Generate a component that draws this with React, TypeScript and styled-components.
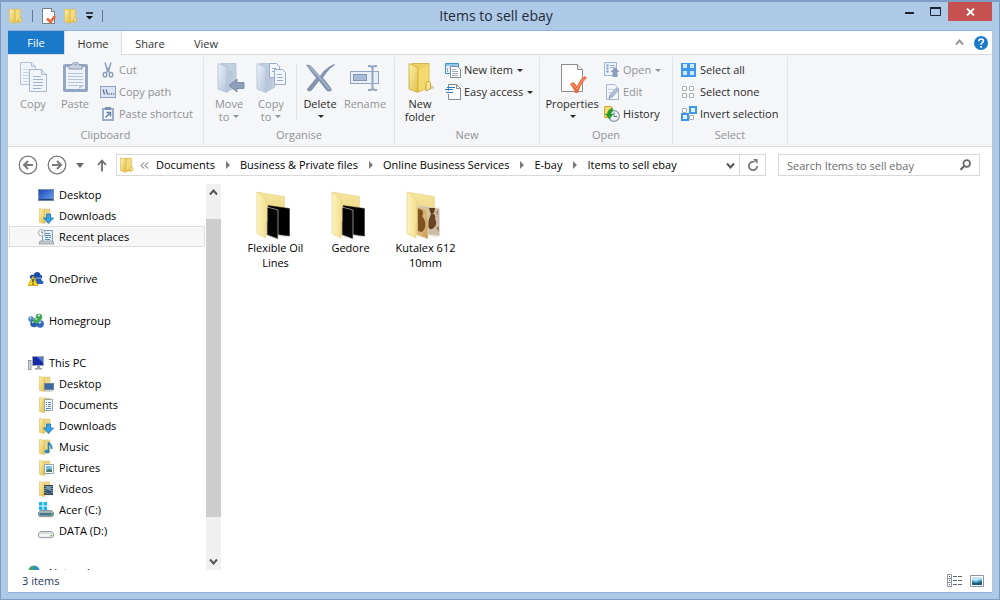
import React from "react";
import styled, { createGlobalStyle, css } from "styled-components";

const GlobalStyle = createGlobalStyle`
  *, *::before, *::after { box-sizing: border-box; }
  body {
    margin: 0;
    font-family: "Open Sans", "Noto Sans", sans-serif;
    font-size: 11px;
    line-height: 16px;
    color: #1a1a1a;
  }
  button, input { font: inherit; color: inherit; margin: 0; }
  button { background: none; border: 0; padding: 0; cursor: pointer; }
  svg { display: block; flex: none; }
  ul, ol { list-style: none; margin: 0; padding: 0; }
`;

/* ---------- window frame ---------- */

const Window = styled.div`
  display: flex;
  flex-direction: column;
  height: 100vh;
  min-height: 320px;
  padding: 0 7px 6px;
  background: #afcae7;
  border: 1px solid #7e9cc4;
  border-top-width: 2px;
`;

const TitleBar = styled.header`
  display: grid;
  grid-template-columns: 1fr auto 1fr;
  height: 28px;
  flex: none;
`;

const QuickAccess = styled.div`
  display: flex;
  align-items: center;
  gap: 6px;
`;

const QuickRule = styled.span`
  width: 1px;
  height: 12px;
  margin: 0 2px;
  background: #64788f;
`;

const QuickButton = styled.button`
  display: flex;
`;

const Title = styled.h1`
  margin: 0;
  padding-right: 8px;
  font-size: 14px;
  line-height: 28px;
  font-weight: 400;
  color: #1e2a38;
`;

const Controls = styled.div`
  display: flex;
  justify-content: flex-end;
  align-items: flex-start;
`;

const ControlButton = styled.button<{ $close?: boolean }>`
  display: flex;
  align-items: center;
  justify-content: center;
  width: ${(p) => (p.$close ? 44 : 26)}px;
  height: 19px;
  background: ${(p) => (p.$close ? "#c75050" : "transparent")};
`;

const Client = styled.main`
  display: flex;
  flex-direction: column;
  flex: 1;
  min-height: 0;
  background: #fff;
  border: 1px solid #93b1d5;
  border-width: 1px 0;
`;

/* ---------- tabs ---------- */

const TabBar = styled.nav`
  display: flex;
  height: 24px;
  flex: none;
  border-bottom: 1px solid #dadbdc;
`;

const Tab = styled.button<{ $kind?: "file" | "active" }>`
  width: 56px;
  height: 24px;
  padding-top: 2px;
  color: #333;
  ${(p) =>
    p.$kind === "file" &&
    css`
      height: 23px;
      padding-top: 0;
      background: #1979ca;
      color: #fff;
    `}
  ${(p) =>
    p.$kind === "active" &&
    css`
      width: 58px;
      background: #f5f6f7;
      border: 1px solid #dadbdc;
      border-width: 0 1px;
    `}
`;

const TabTools = styled.div`
  display: flex;
  align-items: center;
  gap: 10px;
  margin-left: auto;
  padding-right: 4px;
`;

/* ---------- ribbon ---------- */

const Ribbon = styled.div`
  display: flex;
  height: 92px;
  flex: none;
  padding: 2px 0;
  background: #f5f6f7;
  border-bottom: 1px solid #dadbdc;
`;

const Group = styled.section<{ $width: number }>`
  display: flex;
  flex-direction: column;
  width: ${(p) => p.$width}px;
  padding: 2px 0 0 4px;
  border-right: 1px solid #e2e3e4;
`;

const GroupBody = styled.div`
  display: flex;
  height: 70px;
`;

const GroupLabel = styled.h2`
  margin: 0;
  padding-right: 4px;
  font-size: 11px;
  line-height: 18px;
  font-weight: 400;
  text-align: center;
  color: #8f9296;
`;

const BigButton = styled.button<{ $width?: number }>`
  display: flex;
  flex-direction: column;
  align-items: center;
  flex: none;
  width: ${(p) => p.$width ?? 42}px;
  padding-top: 3px;
  line-height: 13px;
  white-space: nowrap;
  color: #2b2b2b;
  &:disabled { color: #8f9296; }
`;

const BigLabel = styled.span`
  display: flex;
  flex-direction: column;
  align-items: center;
  margin-top: 3px;
`;

const LabelLine = styled.span`
  display: flex;
  align-items: center;
  height: 13px;
  gap: 3px;
`;

const SmallColumn = styled.div`
  display: flex;
  flex-direction: column;
  padding-left: 4px;
`;

const SmallButton = styled.button`
  display: flex;
  align-items: center;
  gap: 3px;
  height: 22px;
  white-space: nowrap;
  color: #2b2b2b;
  &:disabled { color: #8f9296; }
`;

const InnerRule = styled.span`
  width: 1px;
  height: 56px;
  margin: 5px 2px 0 4px;
  background: #e2e3e4;
`;

const Caret = styled.span`
  margin-left: 1px;
  border: solid transparent;
  border-width: 3px 3px 0;
  border-top-color: currentColor;
`;

/* ---------- address bar ---------- */

const AddressRow = styled.div`
  display: flex;
  align-items: center;
  height: 37px;
  flex: none;
  padding: 0 12px 1px 10px;
`;

const NavButtons = styled.div`
  display: flex;
  align-items: center;
  gap: 9px;
  width: 98px;
`;

const IconButton = styled.button`
  display: flex;
  align-items: center;
  justify-content: center;
`;

const UpButton = styled(IconButton)`
  width: 18px;
`;

const AddressBox = styled.div`
  display: flex;
  align-items: center;
  flex: 1;
  min-width: 0;
  height: 22px;
  border: 1px solid #d9d9d9;
`;

const Crumbs = styled.ol`
  display: flex;
  align-items: center;
  flex: 1;
  min-width: 0;
  padding-left: 2px;
`;

const Crumb = styled.li`
  display: flex;
  align-items: center;
  white-space: nowrap;
  color: #000;
`;

const CrumbArrow = styled.span`
  margin: 0 10px 0 11px;
  border: solid transparent;
  border-width: 4px 0 4px 4px;
  border-left-color: #7a7a7a;
`;

const OverflowMark = styled.span`
  display: flex;
  padding: 0 7px 0 5px;
`;

const Refresh = styled(IconButton)`
  width: 26px;
  height: 20px;
  margin-left: 4px;
  border-left: 1px solid #d9d9d9;
`;

const SearchBox = styled.label`
  display: flex;
  align-items: center;
  width: 202px;
  height: 22px;
  margin-left: 12px;
  padding: 0 7px 0 8px;
  border: 1px solid #d9d9d9;
`;

const SearchInput = styled.input`
  flex: 1;
  min-width: 0;
  height: 20px;
  padding: 0;
  border: 0;
  outline: 0;
  background: none;
  &::placeholder { color: #6d6d6d; opacity: 1; }
`;

/* ---------- body ---------- */

const Body = styled.div`
  display: flex;
  flex: 1;
  min-height: 0;
`;

const Tree = styled.nav`
  width: 198px;
  padding: 0 1px;
  overflow: hidden;
`;

const TreeGroup = styled.ul`
  margin-bottom: 21px;
`;

const TreeLink = styled.a<{ $root?: boolean; $selected?: boolean }>`
  display: flex;
  align-items: center;
  gap: 5px;
  height: 21px;
  padding-left: ${(p) => (p.$root ? 18 : 28)}px;
  border: 1px solid ${(p) => (p.$selected ? "#dedede" : "transparent")};
  background: ${(p) => (p.$selected ? "#f7f7f7" : "transparent")};
  color: #000;
  text-decoration: none;
  white-space: nowrap;
`;

const Scrollbar = styled.div`
  display: flex;
  flex-direction: column;
  width: 15px;
  background: #f0f0f0;
`;

const ScrollButton = styled(IconButton)`
  height: 17px;
  flex: none;
`;

const ScrollTrack = styled.div`
  display: grid;
  grid-template-rows: 18fr 298fr 36fr;
  flex: 1;
`;

const ScrollThumb = styled.div`
  grid-row: 2;
  background: #cdcdcd;
`;

const Files = styled.ul`
  display: flex;
  flex-wrap: wrap;
  align-content: flex-start;
  flex: 1;
  padding: 6px 17px;
`;

const FileItem = styled.li`
  display: flex;
  flex-direction: column;
  align-items: center;
  width: 75px;
  padding: 0 6px;
  line-height: 15px;
  text-align: center;
  color: #000;
`;

const StatusBar = styled.footer`
  display: flex;
  align-items: center;
  justify-content: space-between;
  height: 22px;
  flex: none;
  padding: 0 8px 0 14px;
  color: #1e395b;
`;

const ViewButtons = styled.div`
  display: flex;
  gap: 7px;
`;

/* ---------- icons ---------- */

const GradientSheet = styled.svg`
  position: absolute;
`;

const Gradients = () => (
  <GradientSheet width="0" height="0" aria-hidden="true">
    <defs>
      <linearGradient id="gold" x1="0" y1="0" x2="1" y2="1">
        <stop offset="0" stopColor="#fcf2ae" />
        <stop offset="1" stopColor="#e3bd45" />
      </linearGradient>
      <linearGradient id="flap" x1="0" y1="0" x2="1" y2="0">
        <stop offset="0" stopColor="#fcf3bd" />
        <stop offset="1" stopColor="#f2df8f" />
      </linearGradient>
      <linearGradient id="back" x1="0" y1="0" x2="0" y2="1">
        <stop offset="0" stopColor="#f4e49c" />
        <stop offset="1" stopColor="#e8cf78" />
      </linearGradient>
      <linearGradient id="ice" x1="0" y1="0" x2="1" y2="1">
        <stop offset="0" stopColor="#eaf1f9" />
        <stop offset="1" stopColor="#b4c4da" />
      </linearGradient>
      <linearGradient id="screen" x1="0" y1="0" x2="1" y2="1">
        <stop offset="0" stopColor="#1c42b8" />
        <stop offset="1" stopColor="#69a6ee" />
      </linearGradient>
      <linearGradient id="wood" x1="0" y1="0" x2="1" y2="1">
        <stop offset="0" stopColor="#b98b48" />
        <stop offset="0.5" stopColor="#dcb877" />
        <stop offset="1" stopColor="#c99a55" />
      </linearGradient>
    </defs>
  </GradientSheet>
);

const OpenFolder = () => (
  <svg width="16" height="16" viewBox="0 0 16 16">
    <path d="M6 1h6.500v11.500L8 15.500z" fill="#e8c85c" />
    <path d="M7 1.300h5.300v10L7 14z" fill="#f2dc80" stroke="#d4af3e" strokeWidth=".5" />
    <path d="M1.500.8 7 2v13.500l-5.500-1.800z" fill="url(#gold)" stroke="#dcb94c" strokeWidth=".6" />
    <path d="M11 10.500c.5-1.500 2.500-1.500 2.500 0v3L11 15z" fill="#f8e48e" stroke="#c9a437" strokeWidth=".6" />
  </svg>
);

const QuickProps = () => (
  <svg width="16" height="16" viewBox="0 0 16 16">
    <path d="M1.500.5h9l3 3v12h-12z" fill="#fff" stroke="#747b84" />
    <path d="M10.500.5v3h3" fill="#dfe6ee" stroke="#747b84" />
    <path d="m6 10.500 3.500 3.500L14 8" fill="none" stroke="#e8683a" strokeWidth="2.600" />
  </svg>
);

const QuickMenu = () => (
  <svg width="9" height="8" viewBox="0 0 9 8">
    <path d="M1 1h7" stroke="#111" strokeWidth="1.500" />
    <path d="M1 4h7L4.500 7.500z" fill="#111" />
  </svg>
);

const CopyIcon = () => (
  <svg width="32" height="32" viewBox="0 0 32 32" fill="#f1f5fa" stroke="#b4c4da">
    <path d="M3.500.5h11l4 4v18h-15z" />
    <path d="M14.500.5v4h4" fill="#dce5f1" />
    <path d="M6 7.500h8M6 10.500h6M6 13.500h6M6 16.500h6M6 19.500h6" stroke="#c6d3e4" />
    <path d="M12.500 7.500h12l5 5v17h-17z" stroke="#a5b7d1" />
    <path d="M24.500 7.500v5h5" fill="#dce5f1" stroke="#a5b7d1" />
    <path d="M16 14.500h8M16 17.500h10M16 20.500h10M16 23.500h10M16 26.500h8" stroke="#a0b3ce" />
  </svg>
);

const PasteIcon = () => (
  <svg width="32" height="32" viewBox="0 0 32 32">
    <rect x="4" y="2" width="25" height="28" rx="2" fill="#95a6c2" />
    <path d="M7 5h19v22H7z" fill="#eef3f9" />
    <path d="M9 11.500h15M9 14.500h15M9 17.500h15M9 20.500h15M9 23.500h10" stroke="#b5c3d8" />
    <path d="M20 27v-4h6z" fill="#b8c6db" />
    <path d="M10 7V3h3c0-4 7-4 7 0h3v4z" fill="#c9d4e3" stroke="#8797b4" />
    <circle cx="16.500" cy="2.500" r="1" fill="#7f8fae" />
  </svg>
);

const CutIcon = () => (
  <svg width="16" height="16" viewBox="0 0 16 16" fill="none" stroke="#8fa0bc" strokeWidth="1.500">
    <path d="M5 .5 7 7l3 4M11 .5 9 7l-3 4" />
    <path d="m7 7 1-1 1 1-1 2z" fill="#8fa0bc" />
    <ellipse cx="5" cy="12.800" rx="1.800" ry="2.200" />
    <ellipse cx="11" cy="12.800" rx="1.800" ry="2.200" />
  </svg>
);

const CopyPathIcon = () => (
  <svg width="16" height="16" viewBox="0 0 16 16">
    <rect x=".5" y="2.500" width="15" height="11" fill="#dbe4f0" stroke="#8ea1c0" />
    <path d="m3 5.500 1.500 5M6 5.500l1.500 5" stroke="#5d7194" strokeWidth="1.200" />
    <path d="M8.500 10h1.200M10.800 10H12M13 10h1.200" stroke="#5d7194" strokeWidth="1.400" />
  </svg>
);

const PasteShortcutIcon = () => (
  <svg width="16" height="16" viewBox="0 0 16 16">
    <path d="M2 2h12v13H2z" fill="#9cadc8" />
    <path d="M4 4h8v9H4z" fill="#f3f6fa" />
    <path d="M5 1h6v3H5z" fill="#8093b3" />
    <path d="m5.500 11.500 4-4M6.500 6.500h4v4" fill="none" stroke="#6881ab" strokeWidth="1.500" />
  </svg>
);

const IceFolder = () => (
  <>
    <path d="M8 1.500h15V25l-9 5z" fill="#c1cfe2" stroke="#a8b9d1" strokeWidth=".7" />
    <path d="M5 1.500 14 5v25.500L5 27z" fill="url(#ice)" stroke="#a8b9d1" strokeWidth=".7" />
    <path d="M14 9h6v18l-6 2z" fill="#b9c8dc" />
  </>
);

const MoveToIcon = () => (
  <svg width="32" height="32" viewBox="0 0 32 32">
    <IceFolder />
    <path d="m16 23.500 8-6.500v3.500h7v6h-7V30z" fill="#8ea0bc" stroke="#71839f" strokeWidth=".8" />
  </svg>
);

const CopyToIcon = () => (
  <svg width="32" height="32" viewBox="0 0 32 32">
    <g transform="translate(-3 0)"><IceFolder /></g>
    <g fill="#f3f7fb" stroke="#98adca">
      <path d="M14.500 1.500h7l3 3v11h-10z" />
      <path d="M17 6.500h4M17 9.500h3" />
      <path d="M19.500 7.500h8l3 3v12h-11z" />
      <path d="M22 12.500h5M22 15.500h6M22 18.500h6" />
    </g>
  </svg>
);

const DeleteIcon = () => (
  <svg width="32" height="32" viewBox="0 0 32 32">
    <path d="M2 3c3-1 5 0 7 3l7 8c4-6 8-9 14-12l1 1c-6 4-9 8-12 13 3 3 7 8 9 12-2 2-4 2-6 0l-7-9c-3 4-6 8-8 10-2 1-4 0-4-2 3-4 6-7 9-11C8 11 5 7 2 3z" fill="#8595b1" />
    <path d="m5 4 13 14 7 9" fill="none" stroke="#a6b4ca" strokeWidth="1.500" />
  </svg>
);

const RenameIcon = () => (
  <svg width="32" height="32" viewBox="0 0 32 32">
    <rect x="1.500" y="9.500" width="28" height="12" fill="#e9eff7" stroke="#92a4c1" />
    <rect x="4.500" y="12.500" width="13" height="6" fill="#a8bad5" stroke="#8196b7" />
    <path d="M19 4c3 0 4 0 4.500 2 .5-2 1.500-2 4.500-2M23.500 6v20M19 28c3 0 4 0 4.500-2 .5 2 1.500 2 4.500 2" fill="none" stroke="#94a5c1" strokeWidth="2" />
  </svg>
);

const NewFolderIcon = () => (
  <svg width="32" height="32" viewBox="0 0 32 32">
    <path d="M22 29 31 26l-3-3z" fill="#ddd2b8" />
    <path d="M8 1.500h17v23.500l-10 5z" fill="#eed067" stroke="#c6a02c" strokeWidth=".7" />
    <path d="M14 8 24.500 3v22L14 30z" fill="#f3d970" />
    <path d="M5 1.500 14 5.500v25L5 27z" fill="url(#gold)" stroke="#cda735" strokeWidth=".8" />
    <path d="M22 21c1-2 4.500-2 4.500 0v5.500L22 29z" fill="#fbe889" stroke="#b9911f" strokeWidth=".8" />
  </svg>
);

const NewItemIcon = () => (
  <svg width="16" height="16" viewBox="0 0 16 16">
    <path d="M.5 1.500h13v10H.5z" fill="#e3f1fb" stroke="#3f93cd" />
    <path d="M1 2h12v2H1z" fill="#8cc6ea" />
    <path d="M5.500 4.500h7l3 3v8h-10z" fill="#fff" stroke="#7f8c98" />
    <path d="M2.500 6v4M7 7.500h4M7 9.500h6M7 11.500h6M7 13.500h6" stroke="#9caab8" />
  </svg>
);

const EasyAccessIcon = () => (
  <svg width="16" height="16" viewBox="0 0 16 16">
    <path d="M3.500 7V.5h8l4 4v11h-12V10" fill="#fff" stroke="#808994" />
    <path d="M11.500.5v4h4" fill="none" stroke="#808994" />
    <path d="M2 3.500h8M0 5.500h8M1 8.500h7" stroke="#297fc2" />
  </svg>
);

const PropertiesIcon = () => (
  <svg width="32" height="32" viewBox="0 0 32 32">
    <path d="M5.500 2.500h16l5 5v22h-21z" fill="#fdfdfd" stroke="#8b8d90" />
    <path d="M21.500 2.500v5h5" fill="#eef0f2" stroke="#8b8d90" />
    <path d="m14 22 3-2 4 4c2-4 4-8 8-10l2 2c-5 4-7 9-9 15h-3c-1-4-3-6-5-9z" fill="#ea6d40" />
    <path d="m16 22 5 5c2-5 5-9 8-11" fill="none" stroke="#f59a73" />
  </svg>
);

const OpenIcon = () => (
  <svg width="16" height="16" viewBox="0 0 16 16">
    <path d="M.5.500h12v13H.5z" fill="#edf3fa" stroke="#9fb5d3" />
    <path d="M2.500 3.500h2M2.500 6.500h2M2.500 9.500h2" stroke="#7c9bc5" strokeWidth="2" />
    <path d="M6 3.500h5M6 5.500h4" stroke="#9db2cf" />
    <path d="m11 5 4.500 5H13.500v5h-5v-5h-2z" fill="#8b9dbb" />
  </svg>
);

const EditIcon = () => (
  <svg width="16" height="16" viewBox="0 0 16 16">
    <path d="M2.500.5h8l4 4v11h-12z" fill="#f2f6fb" stroke="#a3b5cf" />
    <path d="M4 5.500h6M4 8.500h4" stroke="#c4d1e3" />
    <path d="m5 14.500 1-3.500 6.500-7 2 2-6.500 7z" fill="#b4c4dc" stroke="#7f93b3" strokeWidth=".8" />
  </svg>
);

const HistoryIcon = () => (
  <svg width="16" height="16" viewBox="0 0 16 16">
    <path d="M.5.500h7v11h-7z" fill="#f6dc72" stroke="#d0ac3c" />
    <circle cx="10" cy="10" r="5.300" fill="#edf3f7" stroke="#8e9da8" strokeWidth="1.200" />
    <path d="M10 6.500V10.500h3" fill="none" stroke="#5e6e7b" />
    <path d="M8.500 2.500C5 3 3.500 5.500 3.700 8H1.500l4 5 3.500-5H7C7 6.500 7.500 5.500 9 4.500z" fill="#22a12d" stroke="#148020" strokeWidth=".5" />
  </svg>
);

type Cells = [boolean, boolean, boolean, boolean];
const SelectIcon = ({ on }: { on: Cells }) => {
  const all = on.every(Boolean);
  return (
    <svg width="16" height="16" viewBox="0 0 16 16">
      {all && <path d="M0 1h15v14H0z" fill="#3f97f0" />}
      {on.map((v, i) => {
        const x = (i % 2) * 7;
        const y = i > 1 ? 7 : 0;
        if (all) return <rect key={i} x={x + 2} y={y + 2} width="4" height="4" fill="#cfeafd" />;
        return v ? (
          <rect key={i} x={(i % 2) * 8 + 1} y={y + 1} width="6" height="6" fill="#e2f2fe" stroke="#3f97f0" strokeWidth="2" />
        ) : (
          <rect key={i} x={x + 1.500} y={y + 2.500} width="4" height="4" rx=".6" fill="#fff" stroke="#a3a7ab" />
        );
      })}
    </svg>
  );
};

const CircleArrow = ({ flip }: { flip?: boolean }) => (
  <svg width="20" height="20" viewBox="0 0 20 20" fill="none" stroke="#7a7a7a">
    <circle cx="10" cy="10" r="8.800" strokeWidth="1.300" />
    <path d={flip ? "M5 10h9M10 6l4 4-4 4" : "M15 10H6M10 6l-4 4 4 4"} strokeWidth="2" />
  </svg>
);

const UpArrow = () => (
  <svg width="10" height="13" viewBox="0 0 10 13" fill="none" stroke="#6d6d6d" strokeWidth="1.800">
    <path d="M5 12.500V1.500M1 6l4-4.500L9 6" />
  </svg>
);

const Chevron = ({ up, color = "#555" }: { up?: boolean; color?: string }) => (
  <svg width="9" height="7" viewBox="0 0 9 7" fill="none" stroke={color} strokeWidth="2">
    <path d={up ? "m1 5.500 3.500-4 3.500 4" : "m1 1.500 3.500 4 3.500-4"} />
  </svg>
);

const DoubleChevron = () => (
  <svg width="9" height="7" viewBox="0 0 9 7" fill="none" stroke="#555">
    <path d="m4 .5-3 3 3 3M8 .5l-3 3 3 3" />
  </svg>
);

const RefreshIcon = () => (
  <svg width="12" height="13" viewBox="0 0 12 13">
    <path d="M7.500 3A4.200 4.200 0 1 0 10.200 7" fill="none" stroke="#757575" strokeWidth="1.700" />
    <path d="M6 0h4.500v5z" fill="#757575" />
  </svg>
);

const SearchIcon = () => (
  <svg width="13" height="12" viewBox="0 0 13 12" fill="none" stroke="#666">
    <circle cx="7.800" cy="4.500" r="3.300" strokeWidth="1.700" />
    <path d="M5.300 7 1.500 10.800" strokeWidth="2.200" />
  </svg>
);

const HelpIcon = () => (
  <svg width="14" height="14" viewBox="0 0 14 14">
    <circle cx="7" cy="7" r="7" fill="#1979ca" />
    <path d="M4.800 5.200c0-3 4.600-2.800 4.600-.2C9.400 6.800 7 6.700 7 8.800" fill="none" stroke="#fff" strokeWidth="1.600" />
    <path d="M6.100 10h1.800v1.700H6.100z" fill="#fff" />
  </svg>
);

const DesktopIcon = () => (
  <svg width="16" height="16" viewBox="0 0 16 16">
    <rect x=".5" y="2.500" width="15" height="11" fill="url(#screen)" stroke="#7d91ad" />
    <path d="M1 12.500h14" stroke="#24477f" strokeWidth="1.300" />
  </svg>
);

const TreeFolder = ({ children }: { children?: React.ReactNode }) => (
  <svg width="16" height="16" viewBox="0 0 16 16">
    <path d="M6 1h6v13H6z" fill="#ecd68c" stroke="#d9bf69" strokeWidth=".5" />
    <path d="M1.500.5 6.500 1.500v14l-5-1z" fill="url(#gold)" stroke="#dcc068" strokeWidth=".6" />
    {children}
  </svg>
);

const overlays = {
  download: <path d="M8.500 6h4v4h3L10.500 15.500 5.500 10h3z" fill="#35a3e6" stroke="#1871b8" strokeWidth=".8" />,
  desktop: <><rect x="6.500" y="7.500" width="9" height="6" fill="#38699f" stroke="#6c849f" /><path d="M7 15h8" stroke="#a7b3bd" /></>,
  document: <><path d="M6.500 2.500h8v11h-8z" fill="#f7fbff" stroke="#8da4bc" /><path d="M8 5.500h1M10 5.500h3M8 7.500h1M10 7.500h3M8 9.500h1M10 9.500h3M8 11.500h5" stroke="#5f83b1" /></>,
  music: <><ellipse cx="9" cy="12.500" rx="2.500" ry="2" fill="#2d8ccb" /><path d="M10.500 12V3c0 2 4 2 3 7" fill="none" stroke="#2780b8" strokeWidth="1.600" /></>,
  picture: <><path d="M6.500 4.500h9v9h-9z" fill="#fff" stroke="#8fa5b5" /><path d="M8 6h6v6H8z" fill="#79bde0" /><path d="m8 12 2-3 4 1v2z" fill="#47785b" /></>,
  video: <><path d="M6 4h9v10H6z" fill="#39444d" /><path d="M8 5h5v8H8z" fill="#6d98b5" /><path d="M8 12V8l5 2v3z" fill="#35546d" /><path d="M7 5v8M14 5v8" stroke="#d7dde2" strokeDasharray="1 1" /></>,
};

const RecentIcon = () => (
  <svg width="16" height="16" viewBox="0 0 16 16">
    <path d="M4.500 1.500h10v11h-10z" fill="#e8f2f8" stroke="#8b9ca8" />
    <path d="M7 4.500h5M7 6.500h6M7 8.500h3M11 8.500h2M7 10.500h5" stroke="#5192bb" />
    <path d="M2 12h13l1 3H1z" fill="#c5cdd2" stroke="#848f96" strokeWidth=".7" />
    <circle cx="3.800" cy="3.800" r="3.300" fill="#f4f6f7" stroke="#8b969e" strokeWidth=".8" />
    <path d="M3.800 2v2h1.500" fill="none" stroke="#56636c" strokeWidth=".8" />
  </svg>
);

const OneDriveIcon = () => (
  <svg width="16" height="16" viewBox="0 0 16 16">
    <path d="M3 8C0 6 3 3 5.500 4c1-4 7-4 7 0 2 0 2 2 1 4L9 12H3z" fill="#174da5" />
    <path d="M7 12c-1-4 2-5 3-3 1-3 4-2 4 1 2 0 2 3 0 3H8z" fill="#245fbd" />
    <path d="M7 9c0-2 2-3 3.500-1.500C12 6 14 7 14 9" fill="none" stroke="#fff" strokeWidth=".7" />
    <path d="m5 5 5 9.500H0z" fill="#f8d81e" stroke="#bc9d13" strokeWidth=".8" />
    <path d="M5 8v3.500M5 12.500v1.200" stroke="#222" strokeWidth="1.200" />
  </svg>
);

const HomegroupIcon = () => (
  <svg width="16" height="16" viewBox="0 0 16 16">
    <circle cx="11" cy="4" r="3.200" fill="#3fa552" />
    <circle cx="3" cy="6" r="2.800" fill="#5186c9" />
    <circle cx="12.200" cy="11" r="3.700" fill="#3268bd" />
    <circle cx="6" cy="10.500" r="3.800" fill="#2a5fb0" />
    <circle cx="8.500" cy="7.500" r="3" fill="#45ad4e" />
    <path d="m2 5.500 1-1M10 3l2-1M7.500 6.500l1.500-1M11 10l2-1M4 9.500l1.500-1" stroke="#d8eef7" strokeWidth="1.400" />
  </svg>
);

const PcIcon = () => (
  <svg width="16" height="16" viewBox="0 0 16 16">
    <rect x=".5" y="5.500" width="2.500" height="9" fill="#d4d8dc" stroke="#83898f" strokeWidth=".8" />
    <rect x="4.500" y="1.500" width="11" height="9" fill="#1727a6" stroke="#a0a8b1" />
    <path d="m9 2 6 6V2z" fill="#4b78d7" />
    <path d="M9 11h3v2h2v1.500H7V13h2z" fill="#98a0a8" />
  </svg>
);

const DriveIcon = ({ system }: { system?: boolean }) => (
  <svg width="16" height="16" viewBox="0 0 16 16">
    {system && <path d="M1 0h3.500v3.500H1zM5.500 0H9v3.500H5.500zM1 4.500h3.500V8H1zM5.500 4.500H9V8H5.500z" fill="#17b4e8" />}
    <path d="M2.500 8.500h11l2 2V13c0 1-1 1.700-2 1.700h-11c-1 0-2-.7-2-1.700v-2.500z" fill={system ? "#a3b2bb" : "#d9dcdf"} stroke="#747d84" strokeWidth=".7" />
    <path d="M1.500 11h13v2.500h-13z" fill={system ? "#4a7488" : "#f7f7f7"} />
    <path d="M12.500 12.500h1.500" stroke="#3fbf45" strokeWidth="1.500" />
  </svg>
);

const NetworkIcon = () => (
  <svg width="16" height="16" viewBox="0 0 16 16">
    <circle cx="6" cy="6" r="5.500" fill="#2d8fc4" />
    <path d="M1 4c2-3 4-3 5-3L5 5 2 8z" fill="#47a85a" />
    <path d="M7 5.500h8.500v6H7z" fill="#3770bd" stroke="#a7b1bb" />
  </svg>
);

const FileFolder = ({ photo }: { photo?: boolean }) => (
  <svg width="48" height="50" viewBox="0 0 48 50">
    <path d="m26 45 15-1-8 4z" fill="#ededed" />
    <path d="M5 2 32.500 6.500V42l-18 3z" fill="url(#back)" stroke="#e4cd83" strokeWidth=".5" />
    <path d="m16 15.500 21.500 3V46L22 44z" fill={photo ? "#cdbda5" : "#000"} stroke={photo ? "#e2dacb" : "#2b2a26"} strokeWidth=".5" />
    {photo && (
      <g>
        <path d="M27 18h6l-1 5-3 1z" fill="#5d3c1e" />
        <path d="M29 24c3-1 5 1 4 5 3 4 0 9-3 10s-5-2-4-7z" fill="#6b4423" />
        <path d="M36 19v6l-2-2zM34 38l3-2v6z" fill="#a08464" />
      </g>
    )}
    <path d="m15 17 11 3v29l-11-4z" fill={photo ? "url(#wood)" : "#050505"} stroke={photo ? "#ead9b8" : "#c4c0b2"} strokeWidth=".7" />
    {photo && <path d="M17 19c4 1 5 4 3 7 4 4 5 12 0 16l-4-1V20z" fill="#7d5120" />}
    <path d="M5 2c4 2 7 5 10 10.500V31l-1 1.500V48L5 43.500z" fill="url(#flap)" stroke="#e3cb78" strokeWidth=".6" />
  </svg>
);

const DetailsIcon = () => (
  <svg width="16" height="14" viewBox="0 0 16 14">
    <path d="M.5.500h4v4h-4zM.5 4.500h4v4h-4zM.5 8.500h4v4h-4z" fill="#fff" stroke="#8a93a0" />
    <path d="M2 2.500h1M2 6.500h1M2 10.500h1M6 2.500h4M11 2.500h4M6 6.500h4M11 6.500h4M6 10.500h4M11 10.500h4" stroke="#596675" />
  </svg>
);

const LargeIconsIcon = () => (
  <svg width="14" height="14" viewBox="0 0 14 14">
    <path d="M.5 1.500h13v11H.5z" fill="#fff" stroke="#8d96a0" />
    <path d="M2 3h10v8H2z" fill="#58a9dc" />
    <path d="M2 3h10v2L6 7 2 6z" fill="#c1e5f2" />
    <path d="m2 8 4 1 6-2v4H2z" fill="#205b76" />
  </svg>
);

/* ---------- content ---------- */

const crumbs = ["Documents", "Business & Private files", "Online Business Services", "E-bay", "Items to sell ebay"];

type TreeNode = { name: string; icon: React.ReactNode; root?: boolean; selected?: boolean };
const tree: TreeNode[][] = [
  [
    { name: "Desktop", icon: <DesktopIcon /> },
    { name: "Downloads", icon: <TreeFolder>{overlays.download}</TreeFolder> },
    { name: "Recent places", icon: <RecentIcon />, selected: true },
  ],
  [{ name: "OneDrive", icon: <OneDriveIcon />, root: true }],
  [{ name: "Homegroup", icon: <HomegroupIcon />, root: true }],
  [
    { name: "This PC", icon: <PcIcon />, root: true },
    { name: "Desktop", icon: <TreeFolder>{overlays.desktop}</TreeFolder> },
    { name: "Documents", icon: <TreeFolder>{overlays.document}</TreeFolder> },
    { name: "Downloads", icon: <TreeFolder>{overlays.download}</TreeFolder> },
    { name: "Music", icon: <TreeFolder>{overlays.music}</TreeFolder> },
    { name: "Pictures", icon: <TreeFolder>{overlays.picture}</TreeFolder> },
    { name: "Videos", icon: <TreeFolder>{overlays.video}</TreeFolder> },
    { name: "Acer (C:)", icon: <DriveIcon system /> },
    { name: "DATA (D:)", icon: <DriveIcon /> },
  ],
  [{ name: "Network", icon: <NetworkIcon />, root: true }],
];

type BigProps = { icon: React.ReactNode; lines: string[]; caret?: "inline" | "below"; disabled?: boolean; width?: number };
const Big = ({ icon, lines, caret, disabled, width }: BigProps) => (
  <BigButton disabled={disabled} $width={width}>
    {icon}
    <BigLabel>
      {lines.map((line, i) => (
        <LabelLine key={line}>
          {line}
          {caret === "inline" && i === lines.length - 1 && <Caret />}
        </LabelLine>
      ))}
      {caret === "below" && <LabelLine><Caret /></LabelLine>}
    </BigLabel>
  </BigButton>
);

type SmallProps = { icon: React.ReactNode; label: string; caret?: boolean; disabled?: boolean };
const Small = ({ icon, label, caret, disabled }: SmallProps) => (
  <SmallButton disabled={disabled}>
    {icon}
    {label}
    {caret && <Caret />}
  </SmallButton>
);

export default function App() {
  return (
    <>
      <GlobalStyle />
      <Gradients />
      <Window>
        <TitleBar>
          <QuickAccess>
            <OpenFolder />
            <QuickRule />
            <QuickButton aria-label="Properties"><QuickProps /></QuickButton>
            <QuickButton aria-label="New folder"><OpenFolder /></QuickButton>
            <QuickButton aria-label="Customise toolbar"><QuickMenu /></QuickButton>
            <QuickRule />
          </QuickAccess>
          <Title>Items to sell ebay</Title>
          <Controls>
            <ControlButton aria-label="Minimise">
              <svg width="9" height="7"><path d="M0 5h9" stroke="#1b2430" strokeWidth="2" /></svg>
            </ControlButton>
            <ControlButton aria-label="Maximise">
              <svg width="11" height="9"><path d="M.5 1h10v7.500H.5z" fill="none" stroke="#1b2430" /><path d="M0 1h11" stroke="#1b2430" strokeWidth="2" /></svg>
            </ControlButton>
            <ControlButton aria-label="Close" $close>
              <svg width="9" height="8"><path d="m1 .5 7 7M8 .5l-7 7" stroke="#fff" strokeWidth="1.800" /></svg>
            </ControlButton>
          </Controls>
        </TitleBar>

        <Client>
          <TabBar>
            <Tab $kind="file">File</Tab>
            <Tab $kind="active">Home</Tab>
            <Tab>Share</Tab>
            <Tab>View</Tab>
            <TabTools>
              <IconButton aria-label="Minimise the ribbon"><Chevron up color="#9a9a9a" /></IconButton>
              <IconButton aria-label="Help"><HelpIcon /></IconButton>
            </TabTools>
          </TabBar>

          <Ribbon>
            <Group $width={196}>
              <GroupBody>
                <Big icon={<CopyIcon />} lines={["Copy"]} disabled />
                <Big icon={<PasteIcon />} lines={["Paste"]} disabled />
                <SmallColumn>
                  <Small icon={<CutIcon />} label="Cut" disabled />
                  <Small icon={<CopyPathIcon />} label="Copy path" disabled />
                  <Small icon={<PasteShortcutIcon />} label="Paste shortcut" disabled />
                </SmallColumn>
              </GroupBody>
              <GroupLabel>Clipboard</GroupLabel>
            </Group>
            <Group $width={191}>
              <GroupBody>
                <Big icon={<MoveToIcon />} lines={["Move", "to"]} caret="inline" disabled />
                <Big icon={<CopyToIcon />} lines={["Copy", "to"]} caret="inline" disabled />
                <InnerRule />
                <Big icon={<DeleteIcon />} lines={["Delete"]} caret="below" />
                <Big icon={<RenameIcon />} lines={["Rename"]} width={48} disabled />
              </GroupBody>
              <GroupLabel>Organise</GroupLabel>
            </Group>
            <Group $width={145}>
              <GroupBody>
                <Big icon={<NewFolderIcon />} lines={["New", "folder"]} />
                <SmallColumn>
                  <Small icon={<NewItemIcon />} label="New item" caret />
                  <Small icon={<EasyAccessIcon />} label="Easy access" caret />
                </SmallColumn>
              </GroupBody>
              <GroupLabel>New</GroupLabel>
            </Group>
            <Group $width={133}>
              <GroupBody>
                <Big icon={<PropertiesIcon />} lines={["Properties"]} caret="below" width={56} />
                <SmallColumn>
                  <Small icon={<OpenIcon />} label="Open" caret disabled />
                  <Small icon={<EditIcon />} label="Edit" disabled />
                  <Small icon={<HistoryIcon />} label="History" />
                </SmallColumn>
              </GroupBody>
              <GroupLabel>Open</GroupLabel>
            </Group>
            <Group $width={115}>
              <GroupBody>
                <SmallColumn>
                  <Small icon={<SelectIcon on={[true, true, true, true]} />} label="Select all" />
                  <Small icon={<SelectIcon on={[false, false, false, false]} />} label="Select none" />
                  <Small icon={<SelectIcon on={[false, true, true, false]} />} label="Invert selection" />
                </SmallColumn>
              </GroupBody>
              <GroupLabel>Select</GroupLabel>
            </Group>
          </Ribbon>

          <AddressRow>
            <NavButtons>
              <IconButton aria-label="Back"><CircleArrow /></IconButton>
              <IconButton aria-label="Forward"><CircleArrow flip /></IconButton>
              <IconButton aria-label="Recent locations">
                <svg width="8" height="5"><path d="M0 0h8L4 5z" fill="#6d6d6d" /></svg>
              </IconButton>
              <UpButton aria-label="Up"><UpArrow /></UpButton>
            </NavButtons>
            <AddressBox>
              <Crumbs>
                <li><OpenFolder /></li>
                <li><OverflowMark><DoubleChevron /></OverflowMark></li>
                {crumbs.map((name, i) => (
                  <Crumb key={name}>
                    {i > 0 && <CrumbArrow />}
                    {name}
                  </Crumb>
                ))}
              </Crumbs>
              <IconButton aria-label="Previous locations"><Chevron /></IconButton>
              <Refresh aria-label="Refresh"><RefreshIcon /></Refresh>
            </AddressBox>
            <SearchBox>
              <SearchInput type="text" placeholder="Search Items to sell ebay" aria-label="Search Items to sell ebay" />
              <SearchIcon />
            </SearchBox>
          </AddressRow>

          <Body>
            <Tree aria-label="Folders">
              {tree.map((group, g) => (
                <TreeGroup key={g}>
                  {group.map((node) => (
                    <li key={node.name}>
                      <TreeLink href="#" $root={node.root} $selected={node.selected}>
                        {node.icon}
                        {node.name}
                      </TreeLink>
                    </li>
                  ))}
                </TreeGroup>
              ))}
            </Tree>
            <Scrollbar>
              <ScrollButton aria-label="Scroll up"><Chevron up /></ScrollButton>
              <ScrollTrack><ScrollThumb /></ScrollTrack>
              <ScrollButton aria-label="Scroll down"><Chevron /></ScrollButton>
            </Scrollbar>
            <Files>
              <FileItem><FileFolder />Flexible Oil Lines</FileItem>
              <FileItem><FileFolder />Gedore</FileItem>
              <FileItem><FileFolder photo />Kutalex 612 10mm</FileItem>
            </Files>
          </Body>

          <StatusBar>
            <span>3 items</span>
            <ViewButtons>
              <IconButton aria-label="Details view"><DetailsIcon /></IconButton>
              <IconButton aria-label="Large icons view"><LargeIconsIcon /></IconButton>
            </ViewButtons>
          </StatusBar>
        </Client>
      </Window>
    </>
  );
}
